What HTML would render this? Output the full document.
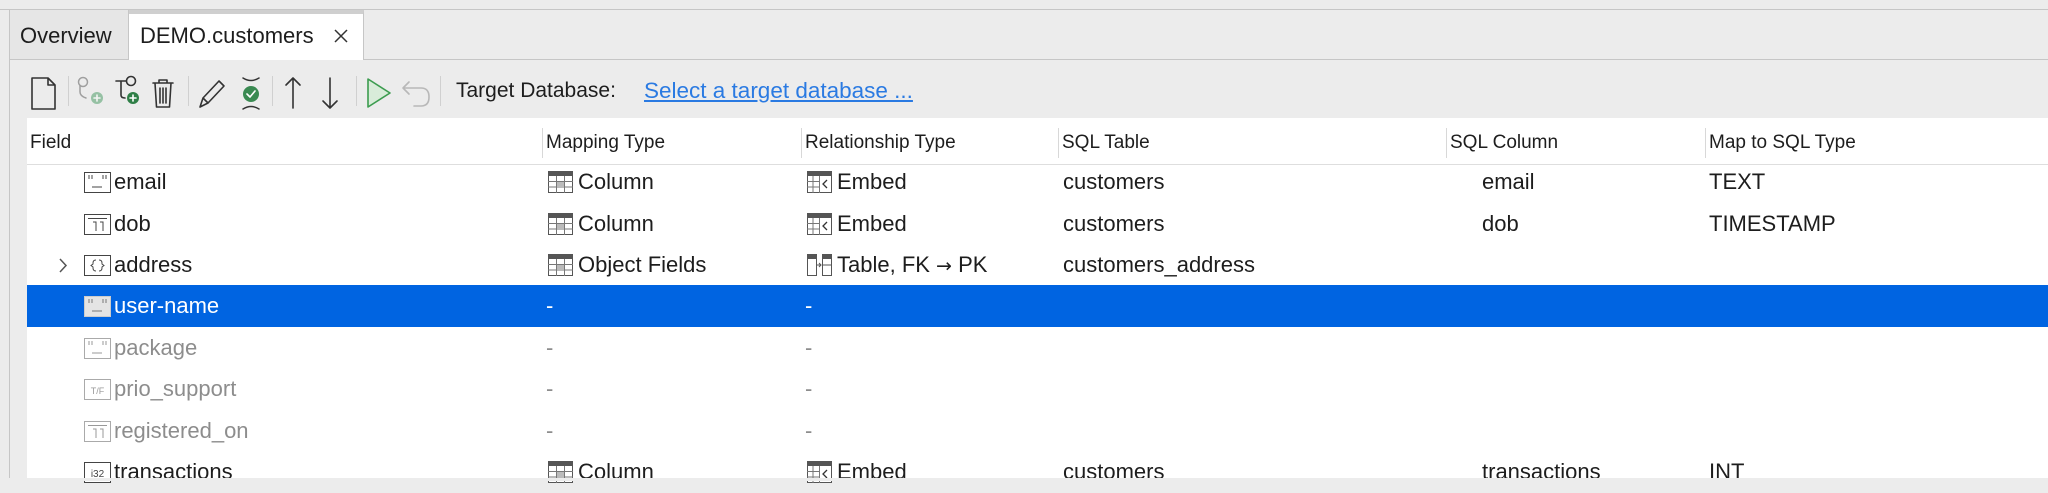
<!DOCTYPE html>
<html><head><meta charset="utf-8"><style>
*{margin:0;padding:0;box-sizing:border-box}
body{width:2048px;height:481px;overflow:hidden;background:#ececec;font-family:"Liberation Sans",Arial,sans-serif;color:#1d1d1d;position:relative}
.a{position:absolute;white-space:nowrap}
.hd{font-size:19px;top:131px;line-height:24px}
.div{position:absolute;top:128px;width:1px;height:30px;background:#d8d8d8}
.row{position:absolute;left:27px;right:0;height:42px}
.t{position:absolute;font-size:22px;line-height:42px;top:0;white-space:nowrap}
.g .t{color:#8d8d8d}
.sel{background:#0064e1}
.sel .t{color:#fff}
.sep{position:absolute;top:76px;width:1px;height:30px;background:#d0d0d0}
</style></head><body>
<div class="a" style="left:0;top:9px;width:2048px;height:1px;background:#c6c6c6"></div>
<div class="a" style="left:9px;top:9px;width:1px;height:472px;background:#c6c6c6"></div>
<div class="a" style="left:10px;top:59px;width:2038px;height:1px;background:#c6c6c6"></div>
<div class="a" style="left:10px;top:10px;width:119px;height:49px;background:#e6e6e6;border-right:1px solid #c6c6c6"></div>
<div class="a" style="left:20px;top:23px;font-size:22px;line-height:26px">Overview</div>
<div class="a" style="left:129px;top:10px;width:235px;height:50px;background:#fff;border-right:1px solid #c6c6c6;border-top:4px solid #cfcfcf"></div>
<div class="a" style="left:140px;top:23px;font-size:22px;line-height:26px">DEMO.customers</div>
<svg class="a" style="left:334px;top:29px" width="14" height="14"><path d="M1 1L13 13M13 1L1 13" stroke="#333" stroke-width="1.5"/></svg>
<svg class="a" style="left:0;top:70px" width="460" height="42" fill="none" stroke-linecap="round" stroke-linejoin="round">
<path d="M32 8h16l7 7v24H32z M48 8v7h7" stroke="#333" stroke-width="1.6"/>
<g opacity=".45"><circle cx="83" cy="12" r="4.5" stroke="#444" stroke-width="1.5"/><path d="M80 16v6q0 4 6 6" stroke="#444" stroke-width="1.5"/><circle cx="97" cy="28" r="6" fill="#2f8f4e"/><path d="M94 28h6M97 25v6" stroke="#fff" stroke-width="1.6"/></g>
<path d="M116 11h10M121 11v14q0 3 4 3" stroke="#333" stroke-width="1.6"/><circle cx="131" cy="11" r="4.5" stroke="#333" stroke-width="1.6"/><circle cx="133" cy="28" r="6" fill="#2f7f47"/><path d="M130 28h6M133 25v6" stroke="#fff" stroke-width="1.6"/>
<path d="M153 13h20M159 13v-3h8v3M155 13l1.5 24h13l1.5-24M160 18v15M163 18v15M166 18v15" stroke="#333" stroke-width="1.6"/>
<path d="M200 37l3-9 16-17 5 5-16 17z M203 28l5 5" stroke="#333" stroke-width="1.6"/>
<path d="M243 8q8 5 16 0M243 39q8-5 16 0" stroke="#333" stroke-width="1.5"/><circle cx="251" cy="24" r="8" fill="#3a8a52"/><path d="M247 24l3 3 5-6" stroke="#fff" stroke-width="1.6"/>
<path d="M293 38V8M286 15l7-7 7 7" stroke="#333" stroke-width="1.6"/>
<path d="M330 8v30M323 31l7 7 7-7" stroke="#333" stroke-width="1.6"/>
<path d="M368 9l22 14-22 14z" stroke="#3c9c4f" stroke-width="1.6" fill="#d8ecd9"/>
<path d="M409 12l-6 6 6 6M403 18h18q8 0 8 9t-8 9h-7" stroke="#b8b8b8" stroke-width="1.6"/>
</svg>
<div class="sep" style="left:68px"></div><div class="sep" style="left:188px"></div><div class="sep" style="left:272px"></div><div class="sep" style="left:356px"></div><div class="sep" style="left:440px"></div>
<div class="a" style="left:456px;top:78px;font-size:21px;line-height:26px">Target Database:</div>
<div class="a" style="left:644px;top:78px;font-size:22.5px;line-height:26px;color:#2a7ae2;text-decoration:underline">Select a target database ...</div>
<div class="a" style="left:27px;top:118px;width:2021px;height:363px;background:#fff"></div>
<div class="a" style="left:27px;top:164px;width:2021px;height:1px;background:#dedede"></div>
<div class="a hd" style="left:30px">Field</div>
<div class="div" style="left:542px"></div><div class="a hd" style="left:546px">Mapping Type</div>
<div class="div" style="left:801px"></div><div class="a hd" style="left:805px">Relationship Type</div>
<div class="div" style="left:1058px"></div><div class="a hd" style="left:1062px">SQL Table</div>
<div class="div" style="left:1446px"></div><div class="a hd" style="left:1450px">SQL Column</div>
<div class="div" style="left:1705px"></div><div class="a hd" style="left:1709px">Map to SQL Type</div>

<svg width="0" height="0" style="position:absolute"><defs>
<g id="col"><rect x="0.5" y="0.5" width="24" height="21" fill="#fff" stroke="#555"/><rect x="0" y="0" width="25" height="5" fill="#555"/><path d="M0 10.5h25M0 16h25M8.5 5v17M16.5 5v17" stroke="#777"/><rect x="9" y="11" width="7" height="5" fill="#bbb"/></g>
<g id="emb"><rect x="0.5" y="0.5" width="24" height="21" fill="#fff" stroke="#555"/><rect x="0" y="0" width="25" height="5" fill="#555"/><path d="M0 10.5h12M0 16h12M6 5v17M12.5 5v17" stroke="#777"/><path d="M20 9l-4 4 4 4" stroke="#333" fill="none" stroke-width="1.3"/></g>
<g id="fk"><rect x="0.5" y="0.5" width="9" height="21" fill="#fff" stroke="#555"/><rect x="15.5" y="0.5" width="9" height="21" fill="#fff" stroke="#555"/><rect x="0" y="0" width="10" height="5" fill="#555"/><rect x="15" y="0" width="10" height="5" fill="#555"/><path d="M15 11h10M10 11h4M12 9l2 2-2 2" stroke="#555" fill="none"/></g>
</defs></svg>

<div class="row" style="top:161px">
 <svg class="a" style="left:57px;top:11px" width="27" height="21"><rect x=".5" y=".5" width="26" height="20" fill="#fff" stroke="#444"/><path d="M5 3v4M8 3v4M19 3v4M22 3v4M8 15h10" stroke="#444"/></svg>
 <div class="t" style="left:87px">email</div>
 <svg class="a" style="left:521px;top:10px" width="25" height="22"><use href="#col"/></svg><div class="t" style="left:551px">Column</div>
 <svg class="a" style="left:780px;top:10px" width="25" height="22"><use href="#emb"/></svg><div class="t" style="left:810px">Embed</div>
 <div class="t" style="left:1036px">customers</div><div class="t" style="left:1455px">email</div><div class="t" style="left:1682px">TEXT</div>
</div>
<div class="row" style="top:203px">
 <svg class="a" style="left:57px;top:11px" width="27" height="21"><rect x=".5" y=".5" width="26" height="20" fill="#fff" stroke="#444"/><path d="M4 4.5h19M9 8h3v9M16 8h3v9" stroke="#444" fill="none"/></svg>
 <div class="t" style="left:87px">dob</div>
 <svg class="a" style="left:521px;top:10px" width="25" height="22"><use href="#col"/></svg><div class="t" style="left:551px">Column</div>
 <svg class="a" style="left:780px;top:10px" width="25" height="22"><use href="#emb"/></svg><div class="t" style="left:810px">Embed</div>
 <div class="t" style="left:1036px">customers</div><div class="t" style="left:1455px">dob</div><div class="t" style="left:1682px">TIMESTAMP</div>
</div>
<div class="row" style="top:244px">
 <svg class="a" style="left:31px;top:14px" width="10" height="15"><path d="M2 1l6 6.5L2 14" stroke="#555" fill="none" stroke-width="1.5"/></svg>
 <svg class="a" style="left:57px;top:11px" width="27" height="21"><rect x=".5" y=".5" width="26" height="20" fill="#fff" stroke="#444"/><path d="M12 5q-3 0-3 3v1l-2 1.5 2 1.5v1q0 3 3 3M15 5q3 0 3 3v1l2 1.5-2 1.5v1q0 3-3 3" stroke="#444" fill="none"/></svg>
 <div class="t" style="left:87px">address</div>
 <svg class="a" style="left:521px;top:10px" width="25" height="22"><use href="#col"/></svg><div class="t" style="left:551px">Object Fields</div>
 <svg class="a" style="left:780px;top:10px" width="25" height="22"><use href="#fk"/></svg><div class="t" style="left:810px">Table, FK <span style="font-family:'DejaVu Sans';font-size:19px">→</span> PK</div>
 <div class="t" style="left:1036px">customers_address</div>
</div>
<div class="row sel" style="top:285px">
 <svg class="a" style="left:57px;top:11px" width="27" height="21"><rect x=".5" y=".5" width="26" height="20" fill="#e4e4e4" stroke="#ccc"/><path d="M5 3v4M8 3v4M19 3v4M22 3v4M8 15h10" stroke="#777"/></svg>
 <div class="t" style="left:87px">user-name</div><div class="t" style="left:519px">-</div><div class="t" style="left:778px">-</div>
</div>
<div class="row g" style="top:327px">
 <svg class="a" style="left:57px;top:11px" width="27" height="21"><rect x=".5" y=".5" width="26" height="20" fill="#fff" stroke="#aaa"/><path d="M5 3v4M8 3v4M19 3v4M22 3v4M8 15h10" stroke="#999"/></svg>
 <div class="t" style="left:87px">package</div><div class="t" style="left:519px">-</div><div class="t" style="left:778px">-</div>
</div>
<div class="row g" style="top:368px">
 <svg class="a" style="left:57px;top:11px" width="27" height="21"><rect x=".5" y=".5" width="26" height="20" fill="#fff" stroke="#aaa"/><text x="13.5" y="15" font-size="9" text-anchor="middle" fill="#999" font-family="Liberation Sans">T/F</text></svg>
 <div class="t" style="left:87px">prio_support</div><div class="t" style="left:519px">-</div><div class="t" style="left:778px">-</div>
</div>
<div class="row g" style="top:410px">
 <svg class="a" style="left:57px;top:11px" width="27" height="21"><rect x=".5" y=".5" width="26" height="20" fill="#fff" stroke="#aaa"/><path d="M4 4.5h19M9 8h3v9M16 8h3v9" stroke="#999" fill="none"/></svg>
 <div class="t" style="left:87px">registered_on</div><div class="t" style="left:519px">-</div><div class="t" style="left:778px">-</div>
</div>
<div class="row" style="top:451px">
 <svg class="a" style="left:57px;top:11px" width="27" height="21"><rect x=".5" y=".5" width="26" height="20" fill="#fff" stroke="#444"/><text x="13.5" y="15" font-size="10" text-anchor="middle" fill="#444" font-family="Liberation Sans">i32</text></svg>
 <div class="t" style="left:87px">transactions</div>
 <svg class="a" style="left:521px;top:10px" width="25" height="22"><use href="#col"/></svg><div class="t" style="left:551px">Column</div>
 <svg class="a" style="left:780px;top:10px" width="25" height="22"><use href="#emb"/></svg><div class="t" style="left:810px">Embed</div>
 <div class="t" style="left:1036px">customers</div><div class="t" style="left:1455px">transactions</div><div class="t" style="left:1682px">INT</div>
</div>
<div class="a" style="left:0;top:478px;width:2048px;height:3px;background:#ececec"></div>
</body></html>
